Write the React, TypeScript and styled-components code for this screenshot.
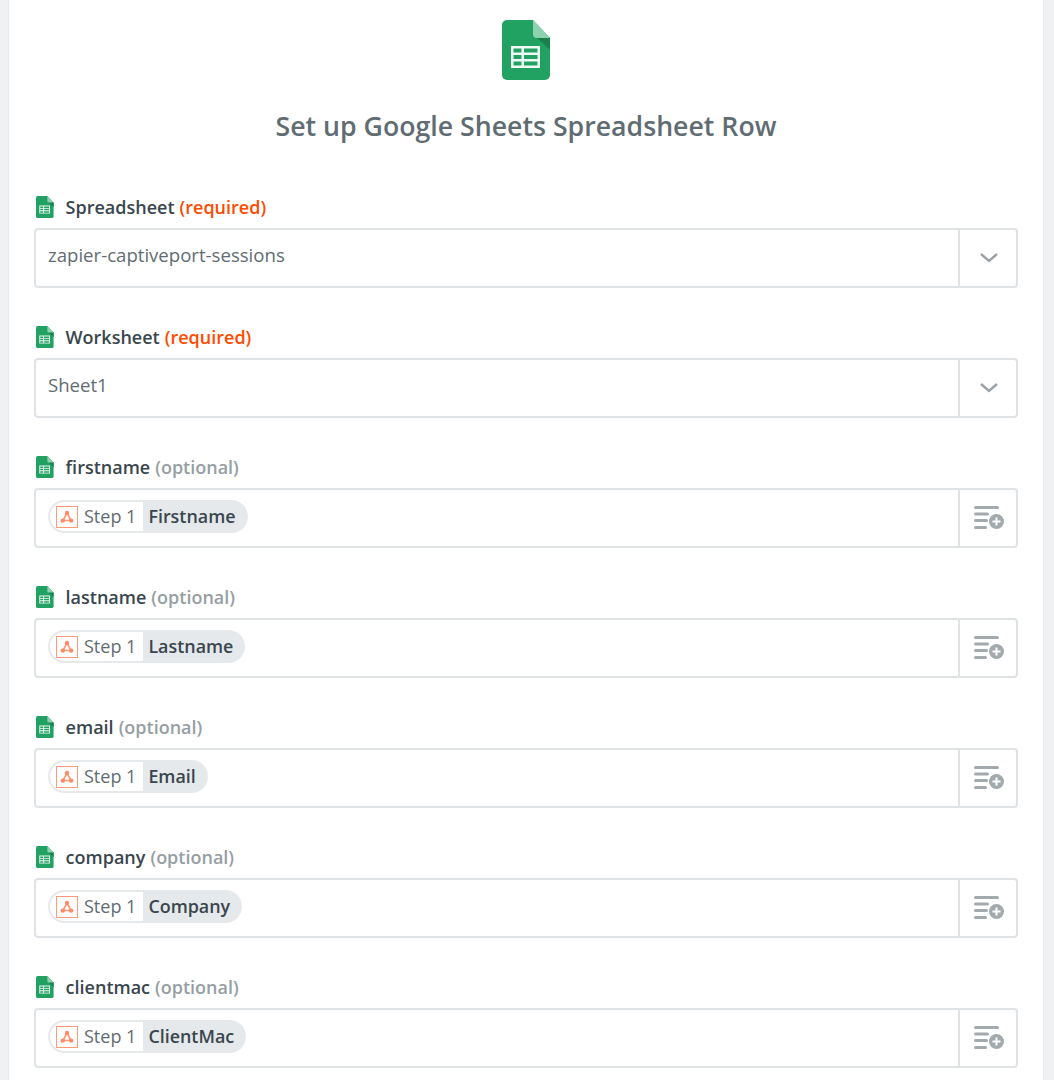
import React from 'react';
import styled, { createGlobalStyle } from 'styled-components';

const GlobalStyle = createGlobalStyle`
  html, body {
    margin: 0;
    height: 1080px;
    overflow: hidden;
    background: #eff1f3;
    font-family: "Open Sans", "Liberation Sans", sans-serif;
  }
`;

const Page = styled.div`
  box-sizing: border-box;
  width: 1054px;
  height: 1080px;
  padding: 0 10px 0 8px;
  overflow: hidden;
`;

const Card = styled.div`
  box-sizing: border-box;
  height: 1080px;
  background: #fff;
  border-left: 1px solid #e9ecee;
  border-right: 1px solid #e9ecee;
  padding: 20px 25px 0 25px;
`;

const Header = styled.header`
  display: flex;
  flex-direction: column;
  align-items: center;
  height: 173px;
`;

const Title = styled.h1`
  margin: 28px 0 0;
  font-size: 26.7px;
  line-height: 36px;
  font-weight: 600;
  color: #5f6c72;
`;

const Field = styled.div`
  height: 130px;
`;

const LabelRow = styled.div`
  display: flex;
  align-items: center;
  height: 28px;
  margin-bottom: 7px;
  padding-left: 2px;
`;

const Label = styled.span`
  margin-left: 12px;
  font-size: 18px;
  font-weight: 600;
  color: #39464d;
`;

const Hint = styled.span<{ $required?: boolean }>`
  margin-left: 5px;
  font-size: 18px;
  font-weight: 600;
  color: ${(p) => (p.$required ? '#ff4a00' : '#969ea3')};
`;

const InputBox = styled.div`
  box-sizing: border-box;
  display: flex;
  height: 60px;
  border: 2px solid #dfe3e6;
  border-radius: 4px;
  background: #fff;
`;

const InputBody = styled.div<{ $chip?: boolean }>`
  flex: 1;
  display: flex;
  align-items: center;
  padding: 0 0 ${(p) => (p.$chip ? '3px' : '8px')} 12px;
  font-size: 18.6px;
  color: #5f6c72;
`;

const SideButton = styled.div`
  box-sizing: border-box;
  width: 58px;
  padding-left: 2px;
  display: flex;
  align-items: center;
  justify-content: center;
  border-left: 2px solid #dfe3e6;
`;

const Chip = styled.div`
  display: flex;
  align-items: stretch;
  height: 33px;
  border-radius: 17px;
  background: #e6e9ec;
  overflow: hidden;
`;

const ChipStep = styled.div`
  display: flex;
  align-items: center;
  background: #fff;
  margin: 2px 0 2px 2px;
  padding: 0 7px 0 6px;
  border-radius: 15px 0 0 15px;
  font-size: 18px;
  line-height: 24px;
  color: #5f6c72;
`;

const ChipIcon = styled.span`
  box-sizing: border-box;
  display: flex;
  align-items: center;
  justify-content: center;
  width: 22px;
  height: 22px;
  margin-right: 6px;
  border: 1px solid #ff9a78;
`;

const StepText = styled.span`
  margin-bottom: 2px;
`;

const ChipValue = styled.div`
  display: flex;
  align-items: center;
  padding: 0 12px 2px 5px;
  font-size: 17.9px;
  font-weight: 600;
  color: #39464d;
`;

const SheetIcon = ({ size }: { size: number }) => (
  <svg width={size * 0.8} height={size} viewBox="0 0 48 60">
    <path d="M5 0h26l17 18v37a5 5 0 0 1-5 5H5a5 5 0 0 1-5-5V5a5 5 0 0 1 5-5z" fill="#21a262" />
    <path d="M31 14l17 16V18L35 14z" fill="#188048" />
    <path d="M31 0l17 18H35a4 4 0 0 1-4-4z" fill="#8ed1b1" />
    <path
      d="M9 26h29v22H9zM11.5 28.5v4h8v-4zM22 28.5v4h13.5v-4zM11.5 35v4h8v-4zM22 35v4h13.5v-4zM11.5 41.5v4h8v-4zM22 41.5v4h13.5v-4z"
      fill="#f0faf5"
      fillRule="evenodd"
    />
  </svg>
);

const Chevron = () => (
  <svg width="20" height="12" viewBox="0 0 20 12">
    <path d="M2 2l8 7 8-7" fill="none" stroke="#9aa2a7" strokeWidth="2.4" />
  </svg>
);

const AddList = () => (
  <svg width="32" height="26" viewBox="0 0 32 26">
    <g fill="#a3aaae">
      <rect x="1" y="1" width="25" height="3" rx="1.5" />
      <rect x="1" y="7.5" width="15" height="3" rx="1.5" />
      <rect x="1" y="14" width="14" height="3" rx="1.5" />
      <rect x="1" y="21" width="13" height="3" rx="1.5" />
      <circle cx="23.5" cy="16.5" r="7.5" />
    </g>
    <path d="M19.5 16.5h8M23.5 12.5v8" stroke="#fff" strokeWidth="2" />
  </svg>
);

const WebhookIcon = () => (
  <svg width="16" height="16" viewBox="0 0 16 16">
    <g fill="none" stroke="#ff9a78" strokeWidth="1.6">
      <path d="M8 4L4 11.5h8z" />
    </g>
    <g fill="#ff8a66">
      <circle cx="8" cy="4" r="2.2" />
      <circle cx="3.8" cy="11.6" r="2.2" />
      <circle cx="12.2" cy="11.6" r="2.2" />
    </g>
  </svg>
);

type FieldData = {
  name: string;
  required?: boolean;
  text?: string;
  value?: string;
};

const fields: FieldData[] = [
  { name: 'Spreadsheet', required: true, text: 'zapier-captiveport-sessions' },
  { name: 'Worksheet', required: true, text: 'Sheet1' },
  { name: 'firstname', value: 'Firstname' },
  { name: 'lastname', value: 'Lastname' },
  { name: 'email', value: 'Email' },
  { name: 'company', value: 'Company' },
  { name: 'clientmac', value: 'ClientMac' },
];

const App = () => (
  <Page>
    <GlobalStyle />
    <Card>
      <Header>
        <SheetIcon size={60} />
        <Title>Set up Google Sheets Spreadsheet Row</Title>
      </Header>
      {fields.map((f) => (
        <Field key={f.name}>
          <LabelRow>
            <SheetIcon size={22} />
            <Label>{f.name}</Label>
            <Hint $required={f.required}>{f.required ? '(required)' : '(optional)'}</Hint>
          </LabelRow>
          <InputBox>
            <InputBody $chip={!f.text}>
              {f.text ?? (
                <Chip>
                  <ChipStep>
                    <ChipIcon>
                      <WebhookIcon />
                    </ChipIcon>
                    <StepText>Step 1</StepText>
                  </ChipStep>
                  <ChipValue>{f.value}</ChipValue>
                </Chip>
              )}
            </InputBody>
            <SideButton>{f.text ? <Chevron /> : <AddList />}</SideButton>
          </InputBox>
        </Field>
      ))}
    </Card>
  </Page>
);

export default App;
